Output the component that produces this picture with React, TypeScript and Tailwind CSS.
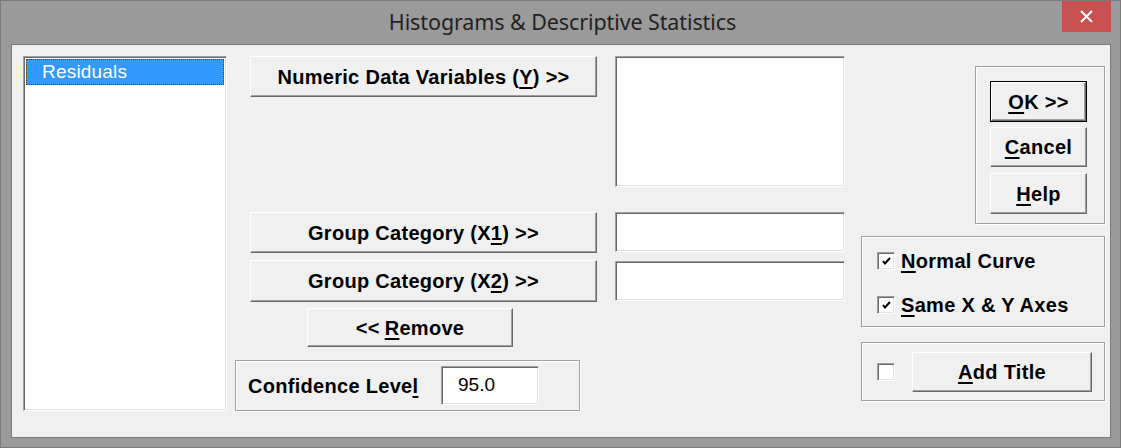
import React from "react";

const raised =
  "bg-[#f0f0f0] border-t border-l border-t-white border-l-white border-b border-r border-b-[#696969] border-r-[#696969] shadow-[inset_-1px_-1px_0_#a0a0a0]";
const sunken =
  "bg-white border-t border-l border-t-[#a0a0a0] border-l-[#a0a0a0] border-b border-r border-b-white border-r-white shadow-[inset_1px_1px_0_#696969,inset_-1px_-1px_0_#e3e3e3]";
const etched =
  "border border-[#a0a0a0] shadow-[inset_1px_1px_0_#fff,1px_1px_0_#fff]";
const label = "font-bold text-[20px] tracking-[0.3px] text-black";

function U({ children }: { children: React.ReactNode }) {
  return <span className="underline underline-offset-[3px] decoration-[1.5px]">{children}</span>;
}

function Btn({
  className = "",
  children,
  def = false,
}: {
  className?: string;
  children: React.ReactNode;
  def?: boolean;
}) {
  if (def) {
    return (
      <div className={`border border-black ${className}`}>
        <div className={`${raised} w-full h-full flex items-center justify-center ${label}`}>
          {children}
        </div>
      </div>
    );
  }
  return (
    <div className={`${raised} flex items-center justify-center ${label} ${className}`}>
      {children}
    </div>
  );
}

function Check({ checked }: { checked: boolean }) {
  return (
    <div className={`${sunken} w-[18px] h-[18px] flex items-center justify-center shrink-0`}>
      {checked && (
        <svg width="9" height="9" viewBox="0 0 9 9">
          <path d="M1 4 L3 6.5 L8 1" stroke="#000" strokeWidth="2" fill="none" />
        </svg>
      )}
    </div>
  );
}

export default function App() {
  return (
    <div className="w-[1121px] h-[448px] bg-[#9a9a9a] border border-[#7a7a7a] flex flex-col font-['Liberation_Sans',Arial,sans-serif] overflow-hidden">
      {/* Title bar */}
      <div className="h-[43px] flex items-start shrink-0">
        <div className="flex-1 h-[43px] flex items-center justify-center pl-[62px] font-['Noto_Sans',sans-serif] text-[21.5px] text-[#222] tracking-[-0.1px]">
          Histograms &amp; Descriptive Statistics
        </div>
        <div className="w-[49px] h-[31px] bg-[#c75050] mr-[9px] flex items-center justify-center">
          <svg width="13" height="13" viewBox="0 0 13 13">
            <path d="M1 1 L12 12 M12 1 L1 12" stroke="#fff" strokeWidth="2" />
          </svg>
        </div>
      </div>

      {/* Client area */}
      <div className="ml-[10px] w-[1100px] h-[394px] bg-[#f0f0f0] border border-[#7a7a7a] flex items-start pt-[11px] pl-[11px] shrink-0">
        {/* List box */}
        <div className={`${sunken} w-[204px] h-[355px] pt-[2px] px-[2px]`}>
          <div className="h-[26px] bg-[#3399ff] border border-dotted border-[#6b3a00] flex items-center pl-[15px] text-white text-[19px] tracking-[0.2px]">
            Residuals
          </div>
        </div>

        {/* Column 2 */}
        <div className="ml-[8px] w-[363px] flex flex-col">
          <Btn className="ml-[15px] w-[347px] h-[41px]">
            Numeric Data Variables (<U>Y</U>) &gt;&gt;
          </Btn>
          <Btn className="ml-[15px] w-[347px] h-[41px] mt-[115px]">
            Group Category (X<U>1</U>) &gt;&gt;
          </Btn>
          <Btn className="ml-[15px] w-[347px] h-[42px] mt-[7px]">
            Group Category (X<U>2</U>) &gt;&gt;
          </Btn>
          <Btn className="ml-[72px] w-[206px] h-[39px] mt-[6px]">
            &lt;&lt; <span className="ml-[5px]"><U>R</U>emove</span>
          </Btn>
          <div className={`${etched} mt-[13px] w-[345px] h-[51px] flex items-center pl-[12px]`}>
            <span className={`${label} w-[193px] shrink-0`}>
              Confidence Leve<U>l</U>
            </span>
            <div className={`${sunken} w-[98px] h-[39px] flex items-center pl-[16px] text-[19px] text-black`}>
              95.0
            </div>
          </div>
        </div>

        {/* Column 3 */}
        <div className="ml-[17px] w-[230px] flex flex-col">
          <div className={`${sunken} h-[131px]`} />
          <div className={`${sunken} h-[40px] mt-[25px]`} />
          <div className={`${sunken} h-[40px] mt-[9px]`} />
        </div>

        {/* Column 4 */}
        <div className="ml-[16px] w-[245px] flex flex-col">
          <div className={`${etched} ml-[114px] w-[130px] h-[158px] mt-[10px] flex flex-col pl-[14px] pt-[14px]`}>
            <Btn def className="w-[97px] h-[41px]">
              <U>O</U>K &gt;&gt;
            </Btn>
            <Btn className="w-[97px] h-[40px] mt-[5px]">
              <U>C</U>ancel
            </Btn>
            <Btn className="w-[97px] h-[41px] mt-[6px]">
              <U>H</U>elp
            </Btn>
          </div>
          <div className={`${etched} w-[244px] h-[91px] mt-[12px] flex flex-col pl-[15px] pt-[15px]`}>
            <div className="flex items-center h-[18px]">
              <Check checked />
              <span className={`ml-[6px] ${label}`}>
                <U>N</U>ormal Curve
              </span>
            </div>
            <div className="flex items-center h-[18px] mt-[26px]">
              <Check checked />
              <span className={`ml-[6px] ${label}`}>
                <U>S</U>ame X &amp; Y Axes
              </span>
            </div>
          </div>
          <div className={`${etched} w-[244px] h-[59px] mt-[15px] flex items-center pl-[15px]`}>
            <Check checked={false} />
            <Btn className="ml-[17px] w-[180px] h-[40px]">
              <U>A</U>dd Title
            </Btn>
          </div>
        </div>
      </div>
    </div>
  );
}
